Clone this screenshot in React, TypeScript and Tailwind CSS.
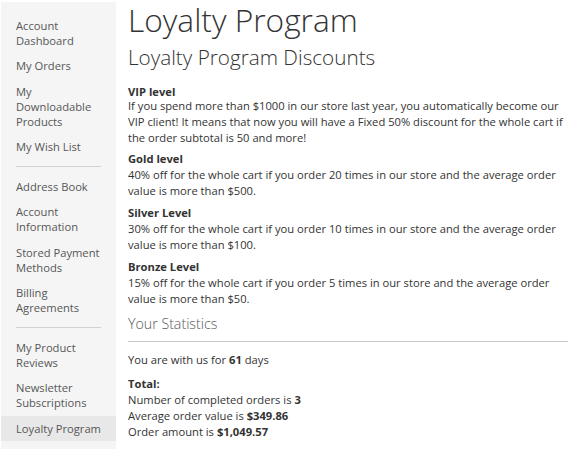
const nav = [
  ['Account Dashboard'],
  ['My Orders'],
  ['My Downloadable Products'],
  ['My Wish List'],
  null,
  ['Address Book'],
  ['Account Information'],
  ['Stored Payment Methods'],
  ['Billing Agreements'],
  null,
  ['My Product Reviews'],
  ['Newsletter Subscriptions'],
  ['Loyalty Program', true],
] as const;

const levels = [
  {
    title: 'VIP level',
    text: 'If you spend more than $1000 in our store last year, you automatically become our VIP client! It means that now you will have a Fixed 50% discount for the whole cart if the order subtotal is 50 and more!',
  },
  {
    title: 'Gold level',
    text: '40% off for the whole cart if you order 20 times in our store and the average order value is more than $500.',
  },
  {
    title: 'Silver Level',
    text: '30% off for the whole cart if you order 10 times in our store and the average order value is more than $100.',
  },
  {
    title: 'Bronze Level',
    text: '15% off for the whole cart if you order 5 times in our store and the average order value is more than $50.',
  },
];

export default function App() {
  return (
    <div
      className="flex w-[586px] h-[450px] bg-white text-[#333] overflow-hidden"
      style={{ fontFamily: '"Open Sans", "Liberation Sans", sans-serif' }}
    >
      {/* sidebar */}
      <div className="mt-[2px] ml-[1px] mb-[1px] w-[115px] shrink-0 bg-[#f5f5f5] pt-[11px] pb-[8px]">
        {nav.map((item, i) =>
          item === null ? (
            <div key={i} className="mx-[15px] my-[7px] h-px bg-[#d1d1d1]" />
          ) : (
            <div
              key={i}
              className={`pl-[15px] pr-[10px] py-[5.125px] text-[11.2px] leading-[15px] text-[#575757] ${
                item[1] ? 'bg-[#e8e8e8]' : ''
              }`}
            >
              {item[0]}
            </div>
          )
        )}
      </div>

      {/* main */}
      <div className="ml-[12px] w-[440px]">
        <h1 className="text-[31.7px] font-light leading-[40px]">Loyalty Program</h1>
        <h2 className="mt-[3px] text-[20.7px] font-light leading-[28px] mb-[14px]">Loyalty Program Discounts</h2>

        <div className="text-[11.2px] leading-[16px]">
          {levels.map((l, i) => (
            <div key={l.title} className={i === 0 ? 'mb-[5px]' : 'mb-[6px]'}>
              <div className={`font-bold ${i === 0 ? 'leading-[13px]' : ''}`}>{l.title}</div>
              <div>{l.text}</div>
            </div>
          ))}
        </div>

        <h3 className="mt-[4px] text-[14.2px] font-light leading-[22px] text-[#575757]">Your Statistics</h3>
        <div className="mt-[6px] h-px bg-[#c8c8c8]" />

        <div className="mt-[10px] text-[11.2px] leading-[16px]">
          <p>
            You are with us for <b>61</b> days
          </p>
          <p className="mt-[8px] font-bold">Total:</p>
          <p>
            Number of completed orders is <b>3</b>
          </p>
          <p>
            Average order value is <b>$349.86</b>
          </p>
          <p>
            Order amount is <b>$1,049.57</b>
          </p>
        </div>
      </div>
    </div>
  );
}
